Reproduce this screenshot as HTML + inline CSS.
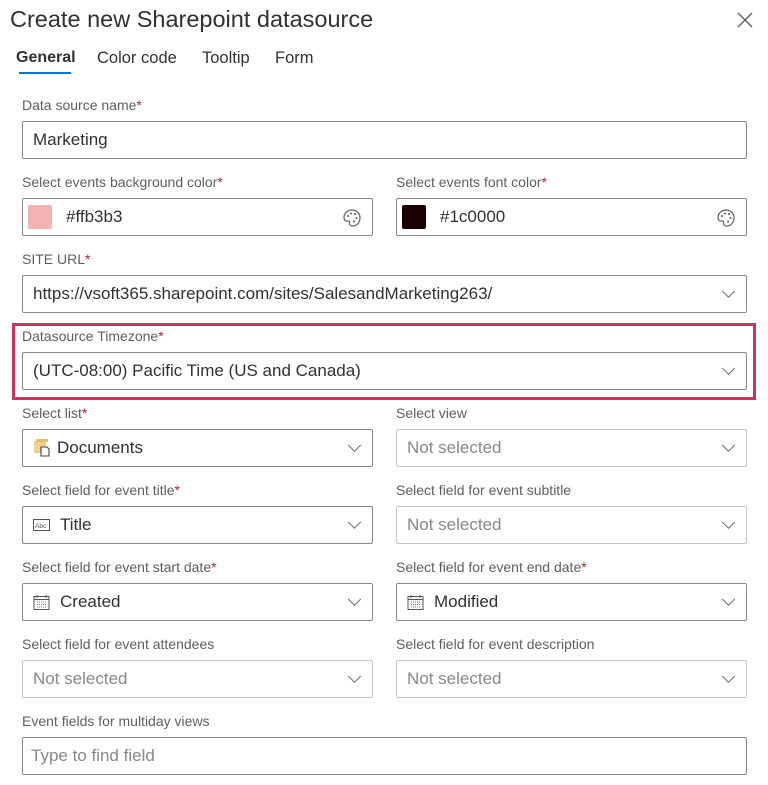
<!DOCTYPE html>
<html><head><meta charset="utf-8"><style>
*{box-sizing:border-box;margin:0;padding:0}
body{width:768px;height:785px;background:#fff;font-family:"Liberation Sans",sans-serif;position:relative;overflow:hidden;color:#323130}
.a{position:absolute}
.t{left:10px;top:6px;font-size:23.5px;color:#323130;white-space:nowrap}
.tab{top:49px;font-size:16.5px;color:#323130}
.lb{font-size:14px;color:#605e5c;white-space:nowrap}
.lb i{font-style:normal;color:#a4262c}
.in{height:38px;border:1px solid #8a8886;border-radius:2px;font-size:17px;display:flex;align-items:center;padding-left:10px;white-space:nowrap;overflow:hidden}
.ph{color:#8a8886}
.L{left:22px;width:351px}.R{left:396px;width:351px}.F{left:22px;width:725px}
.chev{position:absolute;right:10px;top:14px;width:15px;height:9px}
.ic{margin-right:8px;flex:none}
</style></head><body>
<div class="a t">Create new Sharepoint datasource</div>
<svg class="a" style="left:737px;top:12px" width="16" height="16"><path d="M1 1L15 15M15 1L1 15" stroke="#605e5c" stroke-width="1.4"/></svg>
<div class="a tab" style="left:16px;font-weight:bold;color:#323130;font-size:16px">General</div>
<div class="a" style="left:19px;top:72px;width:52px;height:2px;background:#0078d4"></div>
<div class="a tab" style="left:97px">Color code</div>
<div class="a tab" style="left:202px">Tooltip</div>
<div class="a tab" style="left:275px">Form</div>

<div class="a lb" style="left:22px;top:97px">Data source name<i>*</i></div>
<div class="a in F" style="top:121px">Marketing</div>

<div class="a lb" style="left:22px;top:174px">Select events background color<i>*</i></div>
<div class="a in L" style="top:198px;padding-left:5px"><span class="ic" style="width:24px;height:24px;background:#f4b3b3;border-radius:2px;margin-right:14px"></span>#ffb3b3
<svg class="a" style="right:10px;top:9px" width="20" height="20" viewBox="0 0 20 20"><path d="M10 2C5.5 2 2 5.3 2 9.5c0 3 2 4 3.5 3.5 1.2-.4 2.2.2 2 1.5-.3 2 1 3.5 3 3.5 4.5 0 7.5-3.7 7.5-8.2C18 5.3 14.5 2 10 2z" fill="none" stroke="#605e5c" stroke-width="1.2"/><circle cx="6" cy="8" r="1" fill="#605e5c"/><circle cx="9" cy="5.5" r="1" fill="#605e5c"/><circle cx="13" cy="6" r="1" fill="#605e5c"/><circle cx="14.5" cy="10" r="1" fill="#605e5c"/><circle cx="12" cy="13.5" r="1" fill="#605e5c"/></svg></div>

<div class="a lb" style="left:396px;top:174px">Select events font color<i>*</i></div>
<div class="a in R" style="top:198px;padding-left:5px"><span class="ic" style="width:24px;height:24px;background:#1c0000;border-radius:2px;margin-right:14px"></span>#1c0000
<svg class="a" style="right:10px;top:9px" width="20" height="20" viewBox="0 0 20 20"><path d="M10 2C5.5 2 2 5.3 2 9.5c0 3 2 4 3.5 3.5 1.2-.4 2.2.2 2 1.5-.3 2 1 3.5 3 3.5 4.5 0 7.5-3.7 7.5-8.2C18 5.3 14.5 2 10 2z" fill="none" stroke="#605e5c" stroke-width="1.2"/><circle cx="6" cy="8" r="1" fill="#605e5c"/><circle cx="9" cy="5.5" r="1" fill="#605e5c"/><circle cx="13" cy="6" r="1" fill="#605e5c"/><circle cx="14.5" cy="10" r="1" fill="#605e5c"/><circle cx="12" cy="13.5" r="1" fill="#605e5c"/></svg></div>

<div class="a lb" style="left:22px;top:251px">SITE URL<i>*</i></div>
<div class="a in F" style="top:275px">https://vsoft365.sharepoint.com/sites/SalesandMarketing263/<svg class="chev" viewBox="0 0 16 10"><path d="M1 1l7 7 7-7" fill="none" stroke="#605e5c" stroke-width="1"/></svg></div>

<div class="a" style="left:12px;top:323px;width:744px;height:77px;border:3px solid #c8345e"></div>
<div class="a lb" style="left:22px;top:328px">Datasource Timezone<i>*</i></div>
<div class="a in F" style="top:352px">(UTC-08:00) Pacific Time (US and Canada)<svg class="chev" viewBox="0 0 16 10"><path d="M1 1l7 7 7-7" fill="none" stroke="#605e5c" stroke-width="1"/></svg></div>

<div class="a lb" style="left:22px;top:405px">Select list<i>*</i></div>
<div class="a in L" style="top:429px"><svg class="ic" width="18" height="20" viewBox="0 0 18 20" style="margin-right:6px"><rect x="1" y="3" width="12" height="12" fill="#f1cf8e"/><rect x="3" y="1" width="12" height="3" fill="#e8b96a"/><path d="M8 9h6l2 2v7H8z" fill="#fff" stroke="#444" stroke-width="1.1"/></svg>Documents<svg class="chev" viewBox="0 0 16 10"><path d="M1 1l7 7 7-7" fill="none" stroke="#605e5c" stroke-width="1"/></svg></div>
<div class="a lb" style="left:396px;top:405px">Select view</div>
<div class="a in R ph" style="top:429px;border-color:#c8c6c4">Not selected<svg class="chev" viewBox="0 0 16 10"><path d="M1 1l7 7 7-7" fill="none" stroke="#605e5c" stroke-width="1"/></svg></div>

<div class="a lb" style="left:22px;top:482px">Select field for event title<i>*</i></div>
<div class="a in L" style="top:506px"><svg class="ic" width="17" height="12" viewBox="0 0 17 12" style="margin-right:10px"><rect x=".5" y=".5" width="16" height="11" fill="none" stroke="#555"/><text x="2" y="9" font-size="6.5" font-family="Liberation Sans" fill="#555">Abc</text></svg>Title<svg class="chev" viewBox="0 0 16 10"><path d="M1 1l7 7 7-7" fill="none" stroke="#605e5c" stroke-width="1"/></svg></div>
<div class="a lb" style="left:396px;top:482px">Select field for event subtitle</div>
<div class="a in R ph" style="top:506px;border-color:#c8c6c4">Not selected<svg class="chev" viewBox="0 0 16 10"><path d="M1 1l7 7 7-7" fill="none" stroke="#605e5c" stroke-width="1"/></svg></div>

<div class="a lb" style="left:22px;top:559px">Select field for event start date<i>*</i></div>
<div class="a in L" style="top:583px"><svg class="ic" width="17" height="17" viewBox="0 0 17 17" style="margin-right:10px"><rect x="1" y="2.5" width="15" height="13" fill="none" stroke="#555"/><path d="M1 5.5h15M4 1v3M13 1v3" stroke="#555"/><path d="M4 8h9M4 10.5h9M4 13h9" stroke="#777" stroke-dasharray="1 1"/></svg>Created<svg class="chev" viewBox="0 0 16 10"><path d="M1 1l7 7 7-7" fill="none" stroke="#605e5c" stroke-width="1"/></svg></div>
<div class="a lb" style="left:396px;top:559px">Select field for event end date<i>*</i></div>
<div class="a in R" style="top:583px"><svg class="ic" width="17" height="17" viewBox="0 0 17 17" style="margin-right:10px"><rect x="1" y="2.5" width="15" height="13" fill="none" stroke="#555"/><path d="M1 5.5h15M4 1v3M13 1v3" stroke="#555"/><path d="M4 8h9M4 10.5h9M4 13h9" stroke="#777" stroke-dasharray="1 1"/></svg>Modified<svg class="chev" viewBox="0 0 16 10"><path d="M1 1l7 7 7-7" fill="none" stroke="#605e5c" stroke-width="1"/></svg></div>

<div class="a lb" style="left:22px;top:636px">Select field for event attendees</div>
<div class="a in L ph" style="top:660px;border-color:#c8c6c4">Not selected<svg class="chev" viewBox="0 0 16 10"><path d="M1 1l7 7 7-7" fill="none" stroke="#605e5c" stroke-width="1"/></svg></div>
<div class="a lb" style="left:396px;top:636px">Select field for event description</div>
<div class="a in R ph" style="top:660px;border-color:#c8c6c4">Not selected<svg class="chev" viewBox="0 0 16 10"><path d="M1 1l7 7 7-7" fill="none" stroke="#605e5c" stroke-width="1"/></svg></div>

<div class="a lb" style="left:22px;top:713px">Event fields for multiday views</div>
<div class="a in F ph" style="top:737px;padding-left:8px">Type to find field</div>
</body></html>
